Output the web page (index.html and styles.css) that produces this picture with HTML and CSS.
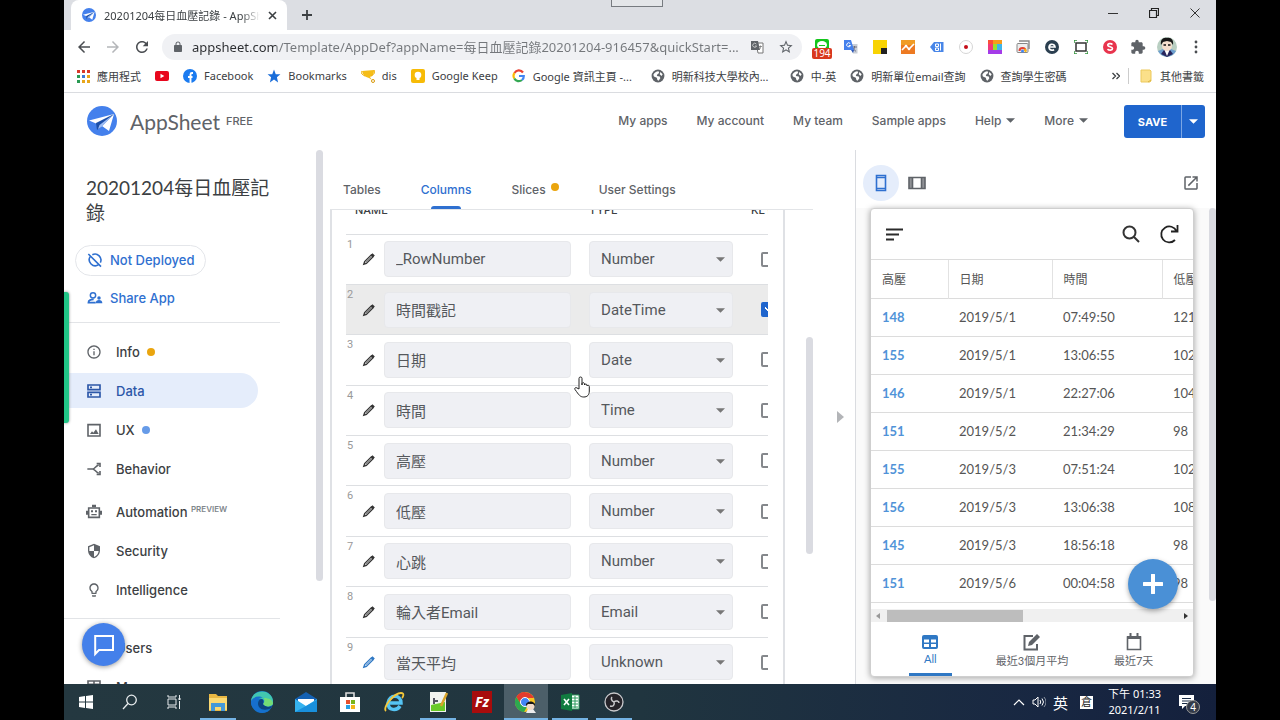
FILE: index.html
```html
<!DOCTYPE html>
<html lang="zh-Hant">
<head>
  <meta charset="UTF-8" />
  <meta name="viewport" content="width=device-width, initial-scale=1.0"/>
  <title>20201204每日血壓記錄 - AppSheet</title>
  <link rel="stylesheet" href="styles.css">
</head>
<body>
  <!-- Shared icons -->
  <svg class="sprite" aria-hidden="true">
    <symbol id="i-plane" viewBox="0 0 30 30"><circle cx="15" cy="15" r="15" fill="#4480ec"/><path d="M2 14.500 27 8 22 25 15 20z" fill="#fff"/><path d="M9 17 27 8 15 20 10 24z" fill="#1c4fa8"/><path d="M12.500 19 27 8 15 20.500 11 23z" fill="#9dbdf5"/></symbol>
    <symbol id="i-globe" viewBox="0 0 24 24"><circle cx="12" cy="12" r="11" fill="#5f6368"/><path d="M4 10c2-4 5-6 9-6l1 3-3 2-1 3 5 1 1 3-3 4-2-1-1-4-5-2z M16 5l4 4-2 3-3-3z" fill="#fff"/></symbol>
    <symbol id="i-edit" viewBox="0 0 24 24"><path d="M3 21l1.500-4.500L16 5l3 3L7.500 19.500z" fill="none" stroke="currentColor" stroke-width="2.200"/><path d="M15 5l3-3 4 4-3 3z" fill="currentColor"/><path d="M6 18 17 7" stroke="currentColor" stroke-width="1"/></symbol>
    <symbol id="i-caret" viewBox="0 0 10 5"><path d="M0 0h10L5 5z" fill="currentColor"/></symbol>
  </svg>

  <div class="screen">
    <!-- Browser chrome -->
    <header class="browser">
      <div class="tab-strip">
        <div class="browser-tab">
          <svg class="i14"><use href="#i-plane"/></svg>
          <span class="tab-title">20201204每日血壓記錄 - AppSheet</span>
          <button class="bare" aria-label="Close tab"><svg width="9" height="9" viewBox="0 0 9 9"><path d="M1 1l7 7M8 1 1 8" stroke="#3c4043" stroke-width="1.600"/></svg></button>
        </div>
        <button class="bare new-tab" aria-label="New tab"><svg width="12" height="12" viewBox="0 0 12 12"><path d="M6 1v10M1 6h10" stroke="#3c4043" stroke-width="1.800"/></svg></button>
        <div class="window-buttons">
          <button class="bare" aria-label="Minimize"><svg width="10" height="10" viewBox="0 0 10 10"><path d="M0 5.500h10" stroke="#333"/></svg></button>
          <button class="bare" aria-label="Restore"><svg width="10" height="10" viewBox="0 0 10 10"><path d="M.5 2.500h7v7h-7zM2.500 2.500v-2h7v7h-2" fill="none" stroke="#222" stroke-width="1.200"/></svg></button>
          <button class="bare" aria-label="Close"><svg width="10" height="10" viewBox="0 0 10 10"><path d="M.5.5l9 9M9.500.5l-9 9" stroke="#333"/></svg></button>
        </div>
      </div>

      <div class="toolbar">
        <button class="bare nav-button" aria-label="Back"><svg class="i18" viewBox="0 0 24 24" fill="#4a4d51"><path d="M20 11H7.830l5.590-5.590L12 4l-8 8 8 8 1.410-1.410L7.830 13H20v-2z"/></svg></button>
        <button class="bare nav-button" aria-label="Forward"><svg class="i18" viewBox="0 0 24 24" fill="#b4b6b9"><path d="M12 4l-1.410 1.410L16.170 11H4v2h12.170l-5.580 5.590L12 20l8-8z"/></svg></button>
        <button class="bare nav-button" aria-label="Reload"><svg class="i18" viewBox="0 0 24 24" fill="#4a4d51"><path d="M17.650 6.350C16.200 4.900 14.210 4 12 4c-4.420 0-7.990 3.580-7.990 8s3.570 8 7.990 8c3.730 0 6.840-2.550 7.730-6h-2.080c-.82 2.330-3.040 4-5.650 4-3.310 0-6-2.690-6-6s2.690-6 6-6c1.660 0 3.140.69 4.220 1.780L13 11h7V4l-2.350 2.350z"/></svg></button>
        <div class="address">
          <svg class="i12" viewBox="0 0 24 24" fill="#5f6368"><path d="M18 8h-1V6c0-2.760-2.240-5-5-5S7 3.240 7 6v2H6c-1.100 0-2 .9-2 2v10c0 1.100.9 2 2 2h12c1.100 0 2-.9 2-2V10c0-1.100-.9-2-2-2zM9 6c0-1.710 1.290-3 3-3s3 1.290 3 3v2H9V6z"/></svg>
          <input type="text" aria-label="Address" value="appsheet.com/Template/AppDef?appName=每日血壓記錄20201204-916457&amp;quickStart=...">
          <svg class="i14" viewBox="0 0 14 14"><path d="M6 3h7v10H8z" fill="#fff" stroke="#777"/><path d="M1 1h7l2 9H1z" fill="#5f6368"/><path d="M6.300 4a2 2 0 1 0 .3 2H5" fill="none" stroke="#ddd" stroke-width=".8"/><path d="M9 6.500h3M10.500 5.500v1c0 2-1 3-1.500 3.500" fill="none" stroke="#777" stroke-width=".8"/></svg>
          <svg class="i16 star" viewBox="0 0 24 24" fill="#5f6368"><path d="M22 9.240l-7.190-.62L12 2 9.190 8.630 2 9.240l5.460 4.730L5.820 21 12 17.270 18.180 21l-1.630-7.030L22 9.240zM12 15.400l-3.760 2.270 1-4.280-3.320-2.880 4.380-.38L12 6.100l1.710 4.040 4.380.38-3.320 2.880 1 4.280L12 15.400z"/></svg>
        </div>
        <div class="extensions">
          <button class="bare ext" aria-label="LINE"><svg class="i16" viewBox="0 0 16 16"><rect x="1" width="14" height="14" rx="2" fill="#14c61c"/><ellipse cx="8" cy="6" rx="5" ry="4" fill="#fff"/><path d="M5 6.500h6" stroke="#14c61c"/></svg><span class="ext-badge">194</span></button>
          <button class="bare ext" aria-label="Google Translate"><svg class="i14" viewBox="0 0 14 14"><path d="M6 4h7.500v9.500H9z" fill="#c9ced6"/><path d="M8 7h5M10.500 6v1c0 2-1 3-2 4M9 8c1 2 2 3 3 3" stroke="#667" fill="none" stroke-width=".9"/><path d="M0 0h7l3 10H0z" fill="#4480ec"/><path d="M7 10h3l-1 3z" fill="#2a56b8"/><path d="M6.200 3.500a2 2 0 1 0 .4 2H4.800" fill="none" stroke="#fff"/></svg></button>
          <button class="bare ext" aria-label="Notes"><svg class="i14" viewBox="0 0 14 14"><path d="M0 0h14v14H0z" fill="#f8d303"/><path d="M8 8h6v6H8z" fill="#222"/></svg></button>
          <button class="bare ext" aria-label="Analytics"><svg class="i14" viewBox="0 0 14 14"><path d="M0 0h14v14H0z" fill="#ed7a22"/><path d="M0 0h14v5H0z" fill="#f09c26"/><path d="M1 10l4-4 3 3 5-5" fill="none" stroke="#fff" stroke-width="1.600"/><circle cx="5" cy="6" r="1.300" fill="#fff"/><circle cx="8" cy="9" r="1.300" fill="#fff"/></svg></button>
          <button class="bare ext" aria-label="Tag assistant"><svg class="i14" viewBox="0 0 14 14"><path d="M0 7l4-5h9.500v10H4z" fill="#4886e8"/><path d="M5.500 4h3v2.500h-3zM5.500 8h3v2.500h-3zM10.500 3.500v7" fill="none" stroke="#fff"/></svg></button>
          <button class="bare ext" aria-label="Recorder"><svg class="i14" viewBox="0 0 14 14"><circle cx="7" cy="7" r="6.500" fill="#fff" stroke="#d5d5d5"/><circle cx="7" cy="7" r="2" fill="#c40d18"/></svg></button>
          <button class="bare ext" aria-label="Color picker"><svg class="i14" viewBox="0 0 14 14"><path d="M0 0h14v4H0z" fill="#fb5037"/><path d="M5 0h9v4H5z" fill="#f79b1c"/><path d="M0 4h5v6H0z" fill="#f0397a"/><path d="M5 4h4v6H5z" fill="#9be02f"/><path d="M9 4h5v6H9z" fill="#40b5e9"/><path d="M0 10h14v4H0z" fill="#a43be8"/></svg></button>
          <button class="bare ext" aria-label="Remote desktop"><svg class="i14" viewBox="0 0 14 14"><path d="M3 1h10v8" fill="none" stroke="#888" stroke-width="1.400"/><rect x="1" y="3.500" width="11" height="9" rx="1" fill="#eee" stroke="#888"/><path d="M3.500 11a3 3 0 0 1 6 0" fill="none" stroke="#e34133" stroke-width="2"/><path d="M8.500 9a3 3 0 0 1 1 3" fill="none" stroke="#f9bd0d" stroke-width="2"/><circle cx="6.500" cy="11" r="1.500" fill="#4285f4"/></svg></button>
          <button class="bare ext" aria-label="E tool"><svg class="i14" viewBox="0 0 14 14"><circle cx="7" cy="7" r="7" fill="#2b3f50"/><path d="M4 7h6a3 3 0 1 0-1 2.500" fill="none" stroke="#fff" stroke-width="1.700"/></svg></button>
          <button class="bare ext" aria-label="Screen capture"><svg class="i14" viewBox="0 0 14 14"><rect x="2" y="3" width="10" height="8" fill="#fff" stroke="#333" stroke-width="1.500"/><path d="M0 3V0h3M11 0h3v3M14 11v3h-3M3 14H0v-3" fill="none" stroke="#32933b" stroke-width="1.500"/></svg></button>
          <button class="bare ext" aria-label="S tool"><svg class="i14" viewBox="0 0 14 14"><circle cx="7" cy="7" r="7" fill="#e8344d"/><path d="M9.500 4.500C8 3 4.500 3.500 4.800 5.300c.3 1.700 4.700 1.300 4.700 3.300 0 2-3.500 2-5 .5" fill="none" stroke="#fff" stroke-width="1.600"/></svg></button>
          <button class="bare ext" aria-label="Extensions"><svg class="i16" viewBox="0 0 24 24" fill="#5f6368"><path d="M20.500 11H19V7c0-1.100-.9-2-2-2h-4V3.500a2.500 2.500 0 0 0-5 0V5H4c-1.100 0-1.990.9-1.990 2v3.800H3.500c1.490 0 2.700 1.210 2.700 2.700s-1.210 2.700-2.700 2.700H2V20c0 1.100.9 2 2 2h3.800v-1.500c0-1.490 1.210-2.700 2.700-2.700s2.700 1.210 2.700 2.700V22H17c1.100 0 2-.9 2-2v-4h1.500a2.500 2.500 0 0 0 0-5z"/></svg></button>
          <button class="bare ext" aria-label="Profile"><svg class="i20" viewBox="0 0 20 20"><circle cx="10" cy="10" r="10" fill="#b9cfc2"/><path d="M1 14a10 10 0 0 0 18 0l-5-2H6z" fill="#6d9fd0"/><path d="M4 17l3-4h6l3 4-6 3z" fill="#29265c"/><path d="M7.500 13h5L10 19z" fill="#fff"/><ellipse cx="10" cy="8.500" rx="5" ry="5.500" fill="#f5dfcd"/><path d="M4 8C3 3 6 0 10 1c4-1 7 2 6 7l-2-3-4-1-4 1z" fill="#171717"/><path d="M6.500 8h2.500M11 8h2.500" stroke="#111" stroke-width="1.500"/></svg></button>
          <button class="bare ext" aria-label="Menu"><svg class="i14" viewBox="0 0 14 14" fill="#4a4d51"><circle cx="7" cy="2" r="1.400"/><circle cx="7" cy="7" r="1.400"/><circle cx="7" cy="12" r="1.400"/></svg></button>
        </div>
      </div>

      <nav class="bookmarks">
        <a href="#"><svg class="i14" viewBox="0 0 14 14"><path d="M1 1h3v3H1zM6 1h3v3H6zM11 1h3v3h-3z" fill="#d93a2b"/><path d="M1 6h3v3H1z" fill="#299a52"/><path d="M6 6h3v3H6z" fill="#3b78d8"/><path d="M11 6h3v3h-3zM6 11h3v3H6zM11 11h3v3h-3z" fill="#e8a61b"/><path d="M1 11h3v3H1z" fill="#299a52"/></svg>應用程式</a>
        <a href="#" aria-label="YouTube"><svg class="i14" viewBox="0 0 14 14"><rect y="2" width="14" height="10" rx="2" fill="#e8071d"/><path d="M5.500 4.800v4.400L9.300 7z" fill="#fff"/></svg></a>
        <a href="#"><svg class="i14" viewBox="0 0 14 14"><circle cx="7" cy="7" r="7" fill="#1b7bf0"/><path d="M10 4H9c-1 0-1.500.5-1.500 1.500V14M5 8h4.500" fill="none" stroke="#fff" stroke-width="1.900"/></svg>Facebook</a>
        <a href="#"><svg class="i14" viewBox="0 0 24 24"><path d="M12 1l3 8h8l-6 5 2 9-7-5-7 5 2-9-6-5h8z" fill="#1a6dd9"/></svg>Bookmarks</a>
        <a href="#"><svg class="i14" viewBox="0 0 14 14"><path d="M1 2l12-1c0 4-1 6-4 7l2 3-3-2C4 8 2 6 1 2z" fill="#f5bd18"/><path d="M1 2C-1 3 1 6 4 7M13 1c2 3-1 5-3 6" fill="none" stroke="#efb111"/><circle cx="12" cy="12" r="1.500" fill="none" stroke="#d89a0d"/></svg>dis</a>
        <a href="#"><svg class="i14" viewBox="0 0 14 14"><rect width="14" height="14" rx="2" fill="#f7bb07"/><circle cx="7" cy="6" r="3.300" fill="#fff"/><path d="M5.500 9h3v2h-3z" fill="#fff"/></svg>Google Keep</a>
        <a href="#" class="wide"><svg class="i14" viewBox="0 0 14 14" fill="none" stroke-width="2.200"><path d="M2.500 4A5 5 0 0 1 11 3.500" stroke="#ea4335"/><path d="M2.300 9.500a5 5 0 0 1 .2-5.500" stroke="#fbbc05"/><path d="M2.300 9.500A5 5 0 0 0 10 11" stroke="#34a853"/><path d="M10 11a5 5 0 0 0 1.800-4H7" stroke="#4285f4"/></svg>Google 資訊主頁 -...</a>
        <a href="#" class="wide"><svg class="i14"><use href="#i-globe"/></svg>明新科技大學校內...</a>
        <a href="#"><svg class="i14"><use href="#i-globe"/></svg>中-英</a>
        <a href="#"><svg class="i14"><use href="#i-globe"/></svg>明新單位email查詢</a>
        <a href="#"><svg class="i14"><use href="#i-globe"/></svg>查詢學生密碼</a>
        <button class="bare more-bookmarks" aria-label="More bookmarks"><svg width="8" height="8" viewBox="0 0 8 8"><path d="M.5 1l3 3-3 3M4.500 1l3 3-3 3" fill="none" stroke="#3c4043" stroke-width="1.300"/></svg></button>
        <a href="#" class="other"><svg class="i14" viewBox="0 0 14 14"><path d="M2 1h9l1 1v10l-1 1H2z" fill="#fbe08a" stroke="#ecc95c"/><path d="M9 13l3-2" stroke="#d9b441"/></svg>其他書籤</a>
      </nav>
    </header>

    <!-- AppSheet editor -->
    <header class="app-header">
      <a href="#" class="brand"><svg class="i30"><use href="#i-plane"/></svg><span class="brand-name">AppSheet</span><span class="plan">FREE</span></a>
      <nav class="app-nav">
        <a href="#">My apps</a>
        <a href="#">My account</a>
        <a href="#">My team</a>
        <a href="#">Sample apps</a>
        <a href="#">Help <svg class="caret"><use href="#i-caret"/></svg></a>
        <a href="#">More <svg class="caret"><use href="#i-caret"/></svg></a>
      </nav>
      <div class="save-group">
        <button class="save">SAVE</button>
        <button class="save-more" aria-label="Save options"><svg class="caret"><use href="#i-caret"/></svg></button>
      </div>
    </header>

    <main class="workspace">
      <aside class="sidebar">
        <h1>20201204每日血壓記錄</h1>
        <button class="pill"><svg class="i16" viewBox="0 0 24 24" fill="none" stroke="currentColor" stroke-width="2.400"><path d="M8 4a9 9 0 0 1 12 12M17.500 19A9 9 0 0 1 5 6.500M2 3l19 19"/></svg>Not Deployed</button>
        <a href="#" class="share"><svg class="i16" viewBox="0 0 24 24"><circle cx="9" cy="8" r="4" fill="none" stroke="currentColor" stroke-width="2.200"/><path d="M13 19H2c0-4 4-5 8-5" fill="none" stroke="currentColor" stroke-width="2.400"/><circle cx="18" cy="12" r="2.600" fill="currentColor"/><path d="M13 20c0-4 2-5 5-5s5 1 5 5z" fill="currentColor"/></svg>Share App</a>
        <hr>
        <nav class="side-nav">
          <a href="#"><svg class="i16" viewBox="0 0 24 24"><path d="M11 7h2v2h-2zm0 4h2v6h-2zm1-9C6.480 2 2 6.480 2 12s4.480 10 10 10 10-4.480 10-10S17.520 2 12 2zm0 18c-4.410 0-8-3.590-8-8s3.590-8 8-8 8 3.590 8 8-3.590 8-8 8z"/></svg>Info<span class="dot"></span></a>
          <a href="#" class="active"><svg class="i16" viewBox="0 0 24 24" fill="none" stroke="currentColor" stroke-width="2.500"><path d="M3 3h18v7H3zM3 14h18v7H3z"/><path d="M6 6.500h3M6 17.500h3"/></svg>Data</a>
          <a href="#"><svg class="i16" viewBox="0 0 24 24"><path d="M3 4h18v17H3z" fill="none" stroke="currentColor" stroke-width="2.400"/><path d="M6 18l3-4 2 2 4-5 4 7z"/></svg>UX<span class="dot blue"></span></a>
          <a href="#"><svg class="i16" viewBox="0 0 24 24" fill="none" stroke="currentColor" stroke-width="2.400"><path d="M2 12h8c3 0 5-5 9-6M10 12c3 0 5 5 9 6"/><path d="M16 4h5v5M16 20h5v-5"/></svg>Behavior</a>
          <a href="#" class="tall"><svg class="i16" viewBox="0 0 24 24"><path d="M4 6h16v14H4z" fill="none" stroke="currentColor" stroke-width="2.400"/><path d="M0 10h4v6H0zM20 10h4v6h-4zM9 1h6v4H9zM7.500 9.500h3v3h-3zM13.500 9.500h3v3h-3zM8 15h8v2H8z"/></svg><span>Automation <sup>PREVIEW</sup></span></a>
          <a href="#"><svg class="i16" viewBox="0 0 24 24"><path d="M12 1L3 5v6c0 5.550 3.840 10.740 9 12 5.160-1.260 9-6.450 9-12V5l-9-4zm0 10.990h7c-.53 4.120-3.280 7.790-7 8.940V12H5V6.300l7-3.110v8.800z"/></svg>Security</a>
          <a href="#"><svg class="i16" viewBox="0 0 24 24"><path d="M9 21c0 .55.45 1 1 1h4c.55 0 1-.45 1-1v-1H9v1zm3-19C8.140 2 5 5.140 5 9c0 2.380 1.190 4.470 3 5.740V17c0 .55.45 1 1 1h6c.55 0 1-.45 1-1v-2.260c1.810-1.270 3-3.360 3-5.740 0-3.860-3.140-7-7-7zm2.850 11.100l-.85.6V16h-4v-2.300l-.85-.6A4.997 4.997 0 0 1 7 9c0-2.760 2.240-5 5-5s5 2.240 5 5c0 1.630-.8 3.160-2.150 4.100z"/></svg>Intelligence</a>
        </nav>
        <hr>
        <nav class="side-nav">
          <a href="#"><svg class="i16" viewBox="0 0 24 24"><circle cx="12" cy="8" r="4"/><path d="M4 20c0-5 16-5 16 0z"/></svg>Users</a>
          <a href="#"><svg class="i16" viewBox="0 0 24 24" fill="none" stroke="currentColor" stroke-width="2.400"><path d="M3 3h18v18H3zM3 8h18M12 3v18"/></svg>Manage</a>
        </nav>
        <span class="recorder-strip"></span>
        <button class="chat" aria-label="Chat"><svg class="i24" viewBox="0 0 24 24"><path d="M3.200 3h17.800v14H7l-3.800 4z" fill="none" stroke="#fff" stroke-width="2"/></svg></button>
      </aside>
      <div class="scrollbar side-scroll"></div>

      <section class="editor">
        <nav class="tabs">
          <a href="#">Tables</a>
          <a href="#" class="active">Columns</a>
          <a href="#">Slices<span class="dot"></span></a>
          <a href="#">User Settings</a>
        </nav>
        <div class="editor-body">
          <div class="card">
            <div class="card-clip">
              <table class="columns">
                <colgroup><col class="c-num"><col class="c-edit"><col class="c-name"><col class="c-type"><col class="c-key"></colgroup>
                <thead>
                  <tr><th colspan="3" class="name-head">NAME</th><th>TYPE</th><th class="key-head">KEY?</th></tr>
                </thead>
                <tbody>
                  <tr><td class="num">1</td><td><button class="bare" aria-label="Edit"><svg class="i14"><use href="#i-edit"/></svg></button></td><td><input type="text" aria-label="Name 1" value="_RowNumber"></td><td><div class="pick"><select aria-label="Type 1"><option>Number</option></select><svg class="caret"><use href="#i-caret"/></svg></div></td><td><input type="checkbox" aria-label="Key 1"></td></tr>
                  <tr class="hover"><td class="num">2</td><td><button class="bare" aria-label="Edit"><svg class="i14"><use href="#i-edit"/></svg></button></td><td><input type="text" aria-label="Name 2" value="時間戳記"></td><td><div class="pick"><select aria-label="Type 2"><option>DateTime</option></select><svg class="caret"><use href="#i-caret"/></svg></div></td><td><input type="checkbox" aria-label="Key 2" checked></td></tr>
                  <tr><td class="num">3</td><td><button class="bare" aria-label="Edit"><svg class="i14"><use href="#i-edit"/></svg></button></td><td><input type="text" aria-label="Name 3" value="日期"></td><td><div class="pick"><select aria-label="Type 3"><option>Date</option></select><svg class="caret"><use href="#i-caret"/></svg></div></td><td><input type="checkbox" aria-label="Key 3"></td></tr>
                  <tr><td class="num">4</td><td><button class="bare" aria-label="Edit"><svg class="i14"><use href="#i-edit"/></svg></button></td><td><input type="text" aria-label="Name 4" value="時間"></td><td><div class="pick"><select aria-label="Type 4"><option>Time</option></select><svg class="caret"><use href="#i-caret"/></svg></div></td><td><input type="checkbox" aria-label="Key 4"></td></tr>
                  <tr><td class="num">5</td><td><button class="bare" aria-label="Edit"><svg class="i14"><use href="#i-edit"/></svg></button></td><td><input type="text" aria-label="Name 5" value="高壓"></td><td><div class="pick"><select aria-label="Type 5"><option>Number</option></select><svg class="caret"><use href="#i-caret"/></svg></div></td><td><input type="checkbox" aria-label="Key 5"></td></tr>
                  <tr><td class="num">6</td><td><button class="bare" aria-label="Edit"><svg class="i14"><use href="#i-edit"/></svg></button></td><td><input type="text" aria-label="Name 6" value="低壓"></td><td><div class="pick"><select aria-label="Type 6"><option>Number</option></select><svg class="caret"><use href="#i-caret"/></svg></div></td><td><input type="checkbox" aria-label="Key 6"></td></tr>
                  <tr><td class="num">7</td><td><button class="bare" aria-label="Edit"><svg class="i14"><use href="#i-edit"/></svg></button></td><td><input type="text" aria-label="Name 7" value="心跳"></td><td><div class="pick"><select aria-label="Type 7"><option>Number</option></select><svg class="caret"><use href="#i-caret"/></svg></div></td><td><input type="checkbox" aria-label="Key 7"></td></tr>
                  <tr><td class="num">8</td><td><button class="bare" aria-label="Edit"><svg class="i14"><use href="#i-edit"/></svg></button></td><td><input type="text" aria-label="Name 8" value="輪入者Email"></td><td><div class="pick"><select aria-label="Type 8"><option>Email</option></select><svg class="caret"><use href="#i-caret"/></svg></div></td><td><input type="checkbox" aria-label="Key 8"></td></tr>
                  <tr><td class="num">9</td><td><button class="bare formula" aria-label="Edit"><svg class="i14"><use href="#i-edit"/></svg></button></td><td><input type="text" aria-label="Name 9" value="當天平均"></td><td><div class="pick"><select aria-label="Type 9"><option>Unknown</option></select><svg class="caret"><use href="#i-caret"/></svg></div></td><td><input type="checkbox" aria-label="Key 9"></td></tr>
                </tbody>
              </table>
            </div>
          </div>
          <div class="scrollbar editor-scroll"></div>
        </div>
        <button class="bare collapse" aria-label="Collapse preview"><svg width="7" height="12" viewBox="0 0 7 12"><path d="M0 0l7 6-7 6z" fill="#b3b5b8"/></svg></button>
      </section>

      <!-- Phone preview -->
      <section class="preview">
        <div class="device-bar">
          <button class="bare device active" aria-label="Phone"><svg class="i18" viewBox="0 0 18 18"><path d="M4.500 1.500h9v15h-9z" fill="none" stroke="currentColor" stroke-width="1.600"/><path d="M4.500 3.500h9M4.500 14.500h9" stroke="currentColor" stroke-width="1.600"/></svg></button>
          <button class="bare device" aria-label="Tablet"><svg class="i18" viewBox="0 0 18 18"><path d="M1 3.500h16v11H1zM4.500 3.500v11M13.500 3.500v11" fill="none" stroke="currentColor" stroke-width="1.600"/><path d="M1 4h3v10H1zM14 4h3v10h-3z" fill="currentColor" opacity=".7"/></svg></button>
          <button class="bare open-new" aria-label="Open in new window"><svg class="i18" viewBox="0 0 24 24" fill="#5f6368"><path d="M19 19H5V5h7V3H5a2 2 0 0 0-2 2v14a2 2 0 0 0 2 2h14c1.100 0 2-.9 2-2v-7h-2v7zM14 3v2h3.590l-9.830 9.830 1.410 1.410L19 6.410V10h2V3h-7z"/></svg></button>
        </div>
        <div class="preview-body">
          <div class="phone">
            <div class="phone-bar">
              <button class="bare" aria-label="Menu"><svg width="17" height="13" viewBox="0 0 17 13"><path d="M0 1.500h17M0 6.500h13M0 11.500h8" stroke="#2b2b2b" stroke-width="2"/></svg></button>
              <button class="bare search" aria-label="Search"><svg class="i18" viewBox="0 0 18 18" fill="none" stroke="#333" stroke-width="2"><circle cx="7.500" cy="7.500" r="6"/><path d="M12 12l5 5"/></svg></button>
              <button class="bare" aria-label="Sync"><svg class="i20" viewBox="0 0 20 20" fill="none" stroke="#222" stroke-width="1.800"><path d="M17.500 7A8 8 0 1 0 16 16M12 7.500h6.500V1"/></svg></button>
            </div>
            <div class="phone-table">
              <table class="records">
                <colgroup><col class="r-high"><col class="r-date"><col class="r-time"><col class="r-low"></colgroup>
                <thead><tr><th>高壓</th><th>日期</th><th>時間</th><th>低壓</th></tr></thead>
                <tbody>
                  <tr><td>148</td><td>2019/5/1</td><td>07:49:50</td><td>121</td></tr>
                  <tr><td>155</td><td>2019/5/1</td><td>13:06:55</td><td>102</td></tr>
                  <tr><td>146</td><td>2019/5/1</td><td>22:27:06</td><td>104</td></tr>
                  <tr><td>151</td><td>2019/5/2</td><td>21:34:29</td><td>98</td></tr>
                  <tr><td>155</td><td>2019/5/3</td><td>07:51:24</td><td>102</td></tr>
                  <tr><td>156</td><td>2019/5/3</td><td>13:06:38</td><td>108</td></tr>
                  <tr><td>145</td><td>2019/5/3</td><td>18:56:18</td><td>98</td></tr>
                  <tr><td>151</td><td>2019/5/6</td><td>00:04:58</td><td>98</td></tr>
                </tbody>
              </table>
            </div>
            <div class="h-scroll">
              <svg width="4" height="6" viewBox="0 0 4 6"><path d="M4 0v6L0 3z" fill="#999"/></svg>
              <div class="h-track"><div class="h-thumb"></div></div>
              <svg width="4" height="6" viewBox="0 0 4 6"><path d="M0 0v6l4-3z" fill="#333"/></svg>
            </div>
            <nav class="phone-nav">
              <a href="#" class="active"><svg class="i18" viewBox="0 0 18 18"><rect x="1" y="2" width="16" height="14" rx="2" fill="currentColor"/><path d="M3 6.500h5v3H3zM10 6.500h5v3h-5zM3 11h5v3H3zM10 11h5v3h-5z" fill="#fff"/></svg>All</a>
              <a href="#"><svg class="i18" viewBox="0 0 18 18"><path d="M10 3H1.500v13.500H14V11" fill="none" stroke="currentColor" stroke-width="2"/><path d="M5 13l1-4 8-8 3 3-8 8z" fill="currentColor"/></svg>最近3個月平均</a>
              <a href="#"><svg class="i18" viewBox="0 0 18 18"><path d="M2.500 4h13v12.500h-13z" fill="none" stroke="currentColor" stroke-width="1.600"/><path d="M2 3h14v3H2zM4.500 0h2v4h-2zM11.500 0h2v4h-2z" fill="currentColor"/></svg>最近7天</a>
            </nav>
            <button class="fab" aria-label="Add"><svg class="i20" viewBox="0 0 20 20"><path d="M10 1v18M1 10h18" stroke="#fff" stroke-width="4" stroke-linecap="round"/></svg></button>
          </div>
          <div class="scrollbar preview-scroll"></div>
        </div>
      </section>

      <svg class="pointer" viewBox="0 0 16 22"><path d="M5 13V2.500a1.500 1.500 0 0 1 3 0V9V7.500a1.400 1.400 0 0 1 2.500 0V9a1.300 1.300 0 0 1 2.500 0v1a1.200 1.200 0 0 1 2.300.500V15c0 4-2 6-5.500 6C6 21 5 19 1 13.500c-1-1.500 1-2.500 2-1.500z" fill="#fff" stroke="#222"/></svg>
    </main>

    <!-- Windows taskbar -->
    <footer class="taskbar">
      <button class="bare task" aria-label="Start"><svg class="i14" viewBox="0 0 14 14" fill="#fff"><path d="M0 2l6-1v5.500H0zM7 1l7-1v6.500H7zM0 7.500h6V13l-6-1zM7 7.500h7V14l-7-1z"/></svg></button>
      <button class="bare task" aria-label="Search"><svg class="i16" viewBox="0 0 16 16" fill="none" stroke="#e8ecee" stroke-width="1.300"><circle cx="9.500" cy="6" r="4.800"/><path d="M6 9.500L1 15"/></svg></button>
      <button class="bare task" aria-label="Task view"><svg class="i14" viewBox="0 0 14 14" fill="none" stroke="#e8ecee"><path d="M1 4h8v6H1zM1 0v2h8V0M1 14v-2h8v2M12.500 0v3M12.500 6v8"/><path d="M11.500 4h2" stroke-width="2"/></svg></button>
      <button class="bare task open" aria-label="Explorer"><svg class="i20" viewBox="0 0 20 20"><path d="M1 2h7l2 2h9v15H1z" fill="#e9b843"/><path d="M1 6h18v12H1z" fill="#fbd972"/><path d="M3 11h14v8h-4v-4H7v4H3z" fill="#4499d8"/></svg></button>
      <button class="bare task" aria-label="Edge"><svg class="i22" viewBox="0 0 22 22"><circle cx="11" cy="11" r="11" fill="#1275c9"/><path d="M0 10C1 2 9-1 15 1c5 2 8 7 7 12-2 3-7 3-9 1 1-2 1-5-2-6C7 7 3 8 0 10z" fill="#42c6b0"/><path d="M0 10c2-4 8-6 12-3-5-1-7 4-5 8 2 5 7 6 12 4-9 7-20-1-19-9z" fill="#176fce"/><path d="M13 14c-2-1 1-4-2-6-4 0-5 5-3 8 3 4 9 3 12 1l1-2c-3 1-6 1-8-1z" fill="#0d4281"/><path d="M13 14c2 2 7 2 9-1 0-4-4-6-9-6 1 3 0 5-1 6z" fill="#74dc76"/></svg></button>
      <button class="bare task" aria-label="Mail"><svg class="i22" viewBox="0 0 22 22"><path d="M0 8L11 1l11 7v13H0z" fill="#1461b3"/><path d="M3 8h16v8H3z" fill="#fff"/><path d="M0 8l11 7 11-7v13H0z" fill="#35b3ef"/><path d="M0 21l22-12v12z" fill="#1990dc"/></svg></button>
      <button class="bare task" aria-label="Store"><svg class="i22" viewBox="0 0 22 22"><path d="M7 7V2h8v5" fill="none" stroke="#ddd" stroke-width="1.600"/><path d="M1 6h20v15H1z" fill="#fff"/><path d="M7 9h4v4H7z" fill="#e6502c"/><path d="M12 9h4v4h-4z" fill="#7ab51c"/><path d="M7 14h4v4H7z" fill="#25a0e4"/><path d="M12 14h4v4h-4z" fill="#f3b51a"/></svg></button>
      <button class="bare task" aria-label="Internet Explorer"><svg class="i22" viewBox="0 0 22 22" fill="none"><path d="M5 12h13c0-9-12-9-13 0 0 8 9 8 12 3" stroke="#55c4f3" stroke-width="3.500"/><path d="M3 20c-4-3 8-18 15-18 4 0 2 4 1 5" stroke="#f4c83a" stroke-width="1.800"/></svg></button>
      <button class="bare task open" aria-label="Notepad++"><svg class="i22" viewBox="0 0 22 22"><path d="M3 1h16v20H3z" fill="#f1f3ef"/><path d="M4 14l14-3v9H4z" fill="#69c928"/><path d="M7 7v6M8 10h3" stroke="#223" stroke-width="1.500"/><path d="M20 2l-6 13" stroke="#d9a42b" stroke-width="2.500"/></svg></button>
      <button class="bare task" aria-label="FileZilla"><span class="fz">Fz</span></button>
      <button class="bare task open current" aria-label="Chrome"><svg class="i22" viewBox="0 0 22 22"><circle cx="10" cy="11" r="10" fill="#f8c620"/><path d="M1.300 6A10 10 0 0 1 19 7H10l-5 5z" fill="#e33b2e"/><path d="M1.300 6A10 10 0 0 0 9 21l4-7-7-1z" fill="#2da94f"/><circle cx="10" cy="11" r="4.500" fill="#4285f4" stroke="#fff"/><circle cx="15.500" cy="15" r="4" fill="#f0d9c7"/><path d="M11 15c-1-6 10-6 9 0l-2-2h-5z" fill="#161616"/><path d="M11 22l2-4 2.500 1 2.500-1 3 4z" fill="#eee"/></svg></button>
      <button class="bare task open" aria-label="Excel"><svg class="i20" viewBox="0 0 20 20"><path d="M11 3h8v14h-8z" fill="#fff" stroke="#2a9a5d"/><path d="M12 6h6M12 9h6M12 12h6M12 15h6M15 4v12" stroke="#2a9a5d"/><path d="M1 3l11-2v18L1 17z" fill="#117c40"/><path d="M4 7l5 6M9 7l-5 6" stroke="#fff" stroke-width="1.600"/></svg></button>
      <button class="bare task open" aria-label="OBS"><svg class="i20" viewBox="0 0 20 20"><circle cx="10" cy="10" r="9" fill="#252329" stroke="#c9c9cc" stroke-width="1.300"/><path d="M10 10c-3-1-3-4-2-5M10 10c2-2 5-1 5 1M10 10c1 3-1 5-4 4" fill="none" stroke="#c9c9cc" stroke-width="1.500"/></svg></button>
      <div class="tray">
        <svg width="12" height="8" viewBox="0 0 12 8"><path d="M1 7l5-5 5 5" fill="none" stroke="#fff" stroke-width="1.200"/></svg>
        <svg class="i14" viewBox="0 0 14 14" fill="none" stroke="#fff"><path d="M1 5h2l3-3v10L3 9H1zM8 5q1.500 2 0 4M10 3.500q3 3.500 0 7"/><path d="M12 2q4 5 0 10" opacity=".5"/></svg>
        <span class="ime">英</span>
        <span class="ime-mode">倉</span>
        <time class="clock"><span>下午 01:33</span><span>2021/2/11</span></time>
        <button class="bare notice" aria-label="Notifications"><svg width="16" height="15" viewBox="0 0 16 15"><path d="M0 0h15v11H6l-3 3v-3H0z" fill="#fff"/><path d="M3 3.500h9M3 6h9M3 8.500h6" stroke="#1a2c46"/></svg><span class="notice-count">4</span></button>
      </div>
    </footer>
    <span class="top-handle"></span>
  </div>
</body>
</html>
```
FILE: styles.css
```css
* {
  box-sizing: border-box;
}

body {
  margin: 0;
  background: #000;
  color: #3c4043;
  font-family: Inter, "Noto Sans CJK TC", sans-serif;
  font-size: 12px;
}

a {
  color: inherit;
  text-decoration: none;
}

button, input, select {
  font: inherit;
  color: inherit;
  margin: 0;
}

svg {
  display: block;
  flex: none;
}

.sprite { position: absolute; width: 0; height: 0; }
.i12 { width: 12px; height: 12px; }
.i14 { width: 14px; height: 14px; }
.i16 { width: 16px; height: 16px; }
.i18 { width: 18px; height: 18px; }
.i20 { width: 20px; height: 20px; }
.i22 { width: 22px; height: 22px; }
.i24 { width: 24px; height: 24px; }
.i30 { width: 30px; height: 30px; }

.bare {
  display: flex;
  align-items: center;
  justify-content: center;
  background: none;
  border: 0;
  padding: 0;
}

.caret {
  width: 9px;
  height: 5px;
}

.screen {
  position: relative;
  display: flex;
  flex-direction: column;
  width: 90%;
  height: 100vh;
  margin: 0 auto;
  background: #fff;
  overflow: hidden;
}

.top-handle {
  position: absolute;
  top: -1px;
  left: 50%;
  width: 52px;
  height: 8px;
  margin-left: -29px;
  border: 1px solid #777b80;
  background: #e4e6e9;
}

/* Browser */
.browser {
  flex: none;
  font-family: "Noto Sans", "Noto Sans CJK TC", sans-serif;
  border-bottom: 1px solid #dadce0;
}

.tab-strip {
  display: flex;
  align-items: center;
  height: 30px;
  padding-left: 7px;
  background: #dcdee3;
}

.browser-tab {
  display: flex;
  align-items: center;
  gap: 8px;
  width: 216px;
  height: 30px;
  padding: 0 10px 0 11px;
  background: #fff;
  border-radius: 8px 8px 0 0;
  font-size: 11px;
}

.tab-title {
  flex: 1;
  overflow: hidden;
  white-space: nowrap;
  mask-image: linear-gradient(90deg, #000 88%, transparent);
}

.new-tab { margin-left: 14px; }

.window-buttons {
  display: flex;
  gap: 31px;
  margin: -4px 16px 0 auto;
}

.toolbar {
  display: flex;
  align-items: center;
  height: 33px;
  padding: 0 9px 0 10px;
}

.nav-button {
  width: 20px;
  margin-right: 9px;
}

.address {
  flex: 1;
  display: flex;
  align-items: center;
  height: 26px;
  margin-left: 1px;
  padding: 0 8px 0 10px;
  border-radius: 13px;
  background: #f0f1f4;
}

.address input {
  flex: 1;
  min-width: 0;
  border: 0;
  padding: 0 8px;
  font-size: 13px;
  color: #5f6368;
  background: linear-gradient(90deg, #2b2d30 92px, #74777b 92px);
  -webkit-background-clip: text;
  background-clip: text;
  -webkit-text-fill-color: transparent;
}

.star { margin-left: 14px; }

.extensions {
  display: flex;
  justify-content: space-between;
  width: 396px;
  margin-left: 9px;
}

.ext {
  position: relative;
  width: 22px;
  height: 22px;
}

.ext-badge {
  position: absolute;
  left: 1px;
  top: 12px;
  width: 20px;
  border-radius: 2px;
  background: #d9381e;
  color: #fff;
  font-size: 10px;
  line-height: 11px;
}

.bookmarks {
  display: flex;
  align-items: center;
  gap: 14px;
  height: 29px;
  padding: 0 12px 4px;
  font-size: 11px;
}

.bookmarks a {
  display: flex;
  align-items: center;
  gap: 7px;
  white-space: nowrap;
}

.bookmarks .wide { width: 125px; }
.bookmarks .more-bookmarks { margin-left: auto; }

.bookmarks .other {
  padding-left: 10px;
  margin-left: -6px;
  border-left: 1px solid #ccc;
}

/* App header */
.app-header {
  flex: none;
  display: flex;
  align-items: center;
  height: 57px;
  padding: 0 11px 0 23px;
  color: #5f6368;
}

.brand {
  display: flex;
  align-items: center;
  padding-bottom: 1px;
}

.brand-name {
  margin: 0 6px 0 13px;
  font-family: Lato, sans-serif;
  font-size: 21px;
}

.plan { font-size: 11px; font-weight: 500; }

.app-nav {
  display: flex;
  gap: 29px;
  margin-left: auto;
  padding-bottom: 3px;
  font-weight: 500;
}

.app-nav a {
  display: flex;
  align-items: center;
  gap: 5px;
}

.save-group {
  display: flex;
  margin-left: 36px;
  border-radius: 3px;
  overflow: hidden;
}

.save-group button {
  height: 33px;
  border: 0;
  padding: 0;
  background: #1f65cd;
  color: #fff;
  font-weight: 700;
  font-size: 11px;
}

.save-group .save { width: 57px; }

.save-group .save-more {
  display: flex;
  align-items: center;
  justify-content: center;
  width: 24px;
  border-left: 1px solid #7ba6e4;
}

/* Workspace */
.workspace {
  position: relative;
  flex: 1;
  display: flex;
  min-height: 0;
}

.scrollbar {
  flex: none;
  width: 7px;
  border-radius: 4px;
  background: #dadbe1;
}

.side-scroll { height: 431px; }
.editor-scroll { height: 217px; margin: 127px 0 0 21px; }
.preview-scroll { height: 393px; }

.sidebar {
  position: relative;
  width: 252px;
  padding-top: 25px;
  overflow: hidden;
}

.sidebar h1 {
  margin: 0 36px 20px 22px;
  font-family: Lato, "Noto Sans CJK TC", sans-serif;
  font-size: 19px;
  font-weight: 400;
  line-height: 25px;
  word-break: break-all;
}

.pill {
  display: flex;
  align-items: center;
  gap: 7px;
  height: 31px;
  margin-left: 11px;
  padding: 0 11px 2px;
  border: 1px solid #e4e6ea;
  border-radius: 16px;
  background: #fff;
  color: #2f70d0;
  font-weight: 500;
  font-size: 13px;
}

.share {
  display: flex;
  align-items: center;
  gap: 7px;
  height: 22px;
  margin: 11px 0 13px 23px;
  color: #2f70d0;
  font-weight: 500;
  font-size: 13px;
}

.sidebar hr {
  margin: 0 36px 11px 0;
  border: 0;
  border-top: 1px solid #e2e4e7;
}

.side-nav {
  display: flex;
  flex-direction: column;
  gap: 4px;
  margin-bottom: 11px;
  font-weight: 500;
  font-size: 13px;
}

.side-nav a {
  display: flex;
  align-items: center;
  height: 35px;
  margin-right: 58px;
  padding-left: 22px;
  border-radius: 0 18px 18px 0;
}

.side-nav .tall {
  height: 39px;
  padding-top: 5px;
}

.side-nav svg {
  margin-right: 14px;
  color: #5f6368;
  fill: #5f6368;
}

.side-nav svg[fill="none"] { fill: none; }

.side-nav .active {
  background: #e5edfb;
  color: #2c57a8;
}

.side-nav .active svg { color: #2c57a8; }

.side-nav sup {
  font-size: 8px;
  font-weight: 600;
  color: #80868b;
}

.dot {
  display: inline-block;
  width: 8px;
  height: 8px;
  margin-left: 7px;
  border-radius: 50%;
  background: #eaa50e;
}

.dot.blue { background: #669be8; }

.recorder-strip {
  position: absolute;
  left: 0;
  top: 142px;
  width: 5px;
  height: 131px;
  border-radius: 0 3px 3px 0;
  background: #21c587;
  box-shadow: 0 0 3px #888;
}

.chat {
  position: absolute;
  left: 18px;
  bottom: 18px;
  display: flex;
  align-items: center;
  justify-content: center;
  width: 43px;
  height: 43px;
  padding: 0;
  border: 0;
  border-radius: 50%;
  background: #4480ea;
  box-shadow: 0 1px 5px rgba(0, 0, 0, .4);
}

/* Column editor */
.editor {
  position: relative;
  flex: 1;
  min-width: 0;
  display: flex;
  flex-direction: column;
  padding: 0 42px 0 7px;
}

.tabs {
  flex: none;
  display: flex;
  gap: 40px;
  height: 60px;
  padding: 20px 0 0 13px;
  border-bottom: 1px solid #e2e4e7;
  color: #5f6368;
  font-weight: 500;
}

.tabs a {
  position: relative;
  line-height: 40px;
}

.tabs .active { color: #2f70d0; }

.tabs .active::after {
  content: "";
  position: absolute;
  left: 20%;
  right: 20%;
  bottom: 0;
  height: 3px;
  border-radius: 3px 3px 0 0;
  background: #2f70d0;
}

.tabs .dot {
  margin-left: 5px;
  vertical-align: 3px;
}

.editor-body {
  flex: 1;
  display: flex;
  min-height: 0;
  overflow: hidden;
}

.card {
  flex: 1;
  min-width: 0;
  padding: 0 15px 0 14px;
  border: solid #dfe1e5;
  border-width: 0 2px;
}

.card-clip {
  overflow: hidden;
  margin-top: -24px;
}

.columns {
  width: 439px;
  height: 502px;
  table-layout: fixed;
  border-collapse: collapse;
}

.c-num { width: 12px; }
.c-edit { width: 26px; }
.c-name { width: 205px; }
.c-type { width: 172px; }
.c-key { width: 24px; }

.columns th {
  height: 48px;
  padding: 0;
  text-align: left;
  font-size: 11px;
  font-weight: 500;
}

.columns .name-head { padding-left: 9px; }

.columns .key-head { text-indent: -10px; }

.columns td { padding: 0; }

.columns tr { border-bottom: 1px solid #dddfe2; }

.columns .hover { background: #ebebeb; }

.columns .num {
  padding: 3px 0 0 1px;
  vertical-align: top;
  color: #999;
  font-family: Roboto, sans-serif;
  font-size: 11px;
}

.columns td .bare {
  width: 22px;
  color: #333;
}

.columns td .formula { color: #2f78c4; }

.columns input[type="text"], .columns select {
  width: 187px;
  height: 36px;
  padding: 0 11px;
  border: 1px solid #e7e8eb;
  border-radius: 4px;
  background: #eff0f4;
  color: #55585c;
  font-family: Roboto, "Noto Sans CJK TC", sans-serif;
  font-size: 15px;
}

.columns select {
  width: 144px;
  appearance: none;
}

.pick { position: relative; }

.pick .caret {
  position: absolute;
  left: 127px;
  top: 16px;
  color: #777;
}

.columns input[type="checkbox"] {
  display: block;
  width: 15px;
  height: 15px;
  appearance: none;
  border: 2px solid #85888c;
  border-radius: 2px;
}

.columns input[type="checkbox"]:checked {
  border-color: #1f65cd;
  background: linear-gradient(45deg, transparent 40%, #fff 40%, #fff 56%, transparent 56%) 2px 3px / 5px 5px no-repeat #1f65cd;
}

.collapse {
  position: absolute;
  right: 11px;
  top: 261px;
}

.pointer {
  position: absolute;
  left: 510px;
  top: 226px;
  width: 16px;
  height: 22px;
}

/* Preview */
.preview {
  flex: none;
  width: 361px;
  display: flex;
  flex-direction: column;
  border-left: 1px solid #dadce0;
}

.device-bar {
  flex: none;
  display: flex;
  align-items: center;
  height: 58px;
  padding: 8px 16px 0 7px;
  color: #5f6368;
}

.device {
  width: 36px;
  height: 36px;
  border-radius: 50%;
}

.device.active {
  background: #e5edfb;
  color: #2f70d0;
}

.open-new { margin-left: auto; }

.preview-body {
  flex: 1;
  display: flex;
  gap: 15px;
  min-height: 0;
  padding-left: 14px;
  background: #fafafa;
}

.phone {
  position: relative;
  flex: 1;
  min-width: 0;
  display: flex;
  flex-direction: column;
  margin-bottom: 7px;
  border: 1px solid #cfcfcf;
  border-radius: 4px;
  background: #fff;
  box-shadow: 0 1px 6px rgba(0, 0, 0, .35);
}

.phone-bar {
  flex: none;
  display: flex;
  align-items: center;
  height: 51px;
  padding: 0 14px 0 15px;
  border-bottom: 1px solid #dcdcdc;
}

.phone-bar .search { margin: 0 19px 0 auto; }

.phone-table {
  flex: 1;
  overflow: hidden;
}

.records {
  width: 382px;
  table-layout: fixed;
  border-collapse: collapse;
  font-family: Lato, "Noto Sans CJK TC", sans-serif;
  font-size: 13px;
  color: #555;
}

.r-high { width: 77px; }
.r-date { width: 104px; }
.r-time { width: 110px; }
.r-low { width: 91px; }

.records th {
  padding: 0 11px;
  border-right: 1px solid #e2e2e2;
  text-align: left;
  font-size: 12px;
  font-weight: 400;
}

.records td { padding: 0 11px; }

.records tr {
  height: 38px;
  border-bottom: 1px solid #dcdcdc;
}

.records td:first-child {
  color: #5093d8;
  font-weight: 700;
}

.h-scroll {
  flex: none;
  display: flex;
  align-items: center;
  gap: 7px;
  height: 13px;
  padding: 0 5px;
  background: #f0f0f0;
}

.h-track { flex: 1; }

.h-thumb {
  width: 47%;
  height: 12px;
  background: #bdbdbd;
}

.phone-nav {
  flex: none;
  display: flex;
  justify-content: center;
  gap: 44px;
  height: 54px;
  color: #5f6368;
  font-family: Lato, "Noto Sans CJK TC", sans-serif;
  font-size: 11px;
}

.phone-nav a {
  display: flex;
  flex-direction: column;
  align-items: center;
  gap: 1px;
  min-width: 43px;
  padding-top: 11px;
}

.phone-nav .active {
  color: #2f78c4;
  border-bottom: 3px solid #2f78c4;
}

.fab {
  position: absolute;
  right: 15px;
  bottom: 67px;
  display: flex;
  align-items: center;
  justify-content: center;
  width: 50px;
  height: 50px;
  padding: 0;
  border: 0;
  border-radius: 50%;
  background: #4a90d6;
  box-shadow: 0 2px 5px rgba(0, 0, 0, .35);
}

/* Taskbar */
.taskbar {
  flex: none;
  display: flex;
  height: 36px;
  background: linear-gradient(90deg, #243840, #20353f 50%, #182742 85%, #14203c);
  color: #fff;
  font-family: "Noto Sans", "Noto Sans CJK TC", sans-serif;
}

.task {
  position: relative;
  width: 44px;
}

.task.open::after {
  content: "";
  position: absolute;
  left: 4px;
  right: 4px;
  bottom: 0;
  height: 2px;
  background: #74b3e4;
}

.task.current { background: #4c5f69; }

.task.current::after {
  left: 0;
  right: 0;
}

.fz {
  width: 20px;
  height: 22px;
  background: #a80c0c;
  font-size: 14px;
  font-weight: 700;
  font-style: italic;
  line-height: 21px;
}

.tray {
  display: flex;
  align-items: center;
  margin-left: auto;
  padding-right: 21px;
}

.tray > svg { margin-right: 7px; }

.ime {
  margin-right: 12px;
  font-size: 15px;
}

.ime-mode {
  width: 13px;
  height: 13px;
  background: #fff;
  color: #222;
  font-size: 11px;
  line-height: 12px;
  text-align: center;
}

.clock {
  display: flex;
  flex-direction: column;
  align-items: center;
  margin: 0 18px 0 15px;
  font-size: 11px;
  line-height: 16px;
}

.notice { position: relative; }

.notice-count {
  position: absolute;
  left: 7px;
  top: 5px;
  width: 14px;
  height: 14px;
  border: 1px solid #999;
  border-radius: 50%;
  background: #333a48;
  font-size: 10px;
  line-height: 12px;
}
```
